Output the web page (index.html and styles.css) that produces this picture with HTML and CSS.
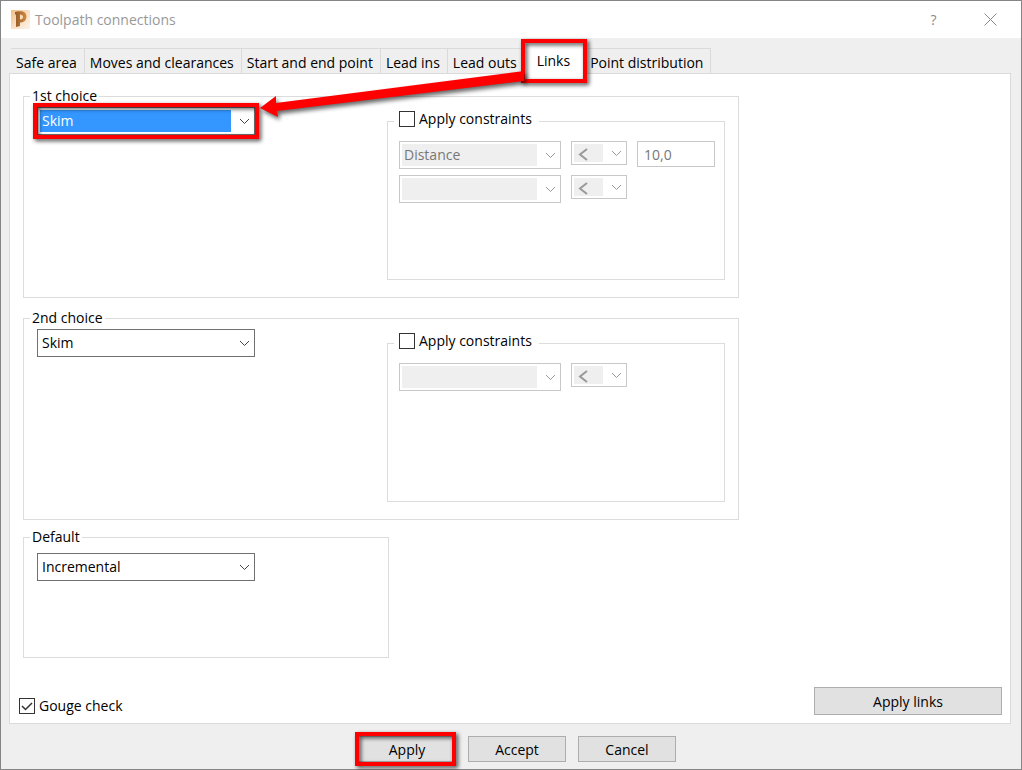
FILE: index.html
```html
<!DOCTYPE html>
<html lang="en">
<head>
    <meta charset="UTF-8">
    <meta name="viewport" content="width=device-width, initial-scale=1.0">
    <title>Toolpath connections</title>
    <link rel="stylesheet" href="styles.css">
</head>
<body>
    <div class="window">
        <header class="titlebar">
            <svg class="app-icon" viewBox="0 0 19 19" aria-hidden="true">
                <defs>
                    <linearGradient id="tile" x1="0" y1="0" x2="1" y2="1">
                        <stop offset="0" stop-color="#f3bd84"/>
                        <stop offset="0.5" stop-color="#f9dfc4"/>
                        <stop offset="1" stop-color="#fdf3e8"/>
                    </linearGradient>
                    <linearGradient id="stroke" x1="0" y1="0" x2="1" y2="0">
                        <stop offset="0" stop-color="#915c2a"/>
                        <stop offset="1" stop-color="#d68a3c"/>
                    </linearGradient>
                </defs>
                <rect width="19" height="19" fill="url(#tile)"/>
                <path d="M4 2C7 1 15.500 0 15.500 6.500C15.500 11 12 12.500 9 12.500V16L5 17V5L4 4zM9 4.500v5c4 0 4-5 0-5z" fill="url(#stroke)" fill-rule="evenodd"/>
            </svg>
            <h1 class="title">Toolpath connections</h1>
            <button class="title-button" type="button" aria-label="Help">?</button>
            <button class="title-button" type="button" aria-label="Close">
                <svg width="13" height="13" viewBox="0 0 13 13"><path d="M.5.5l12 12M12.500.5l-12 12" fill="none" stroke="#888"/></svg>
            </button>
        </header>

        <nav class="tabs">
            <button class="tab" type="button">Safe area</button>
            <button class="tab" type="button">Moves and clearances</button>
            <button class="tab" type="button">Start and end point</button>
            <button class="tab" type="button">Lead ins</button>
            <button class="tab" type="button">Lead outs</button>
            <button class="tab active marked" type="button">Links</button>
            <button class="tab" type="button">Point distribution</button>
        </nav>

        <main class="panel">
            <fieldset class="group choice">
                <legend>1st choice</legend>
                <div class="marked combo-wrap">
                    <select class="combo selected" aria-label="1st choice">
                        <option>Skim</option>
                        <option>Incremental</option>
                    </select>
                </div>
                <fieldset class="group constraints">
                    <legend><label class="check"><input type="checkbox"> Apply constraints</label></legend>
                    <div class="row">
                        <select class="combo" aria-label="Constraint" disabled><option>Distance</option></select>
                        <select class="operator" aria-label="Less than" disabled><option value="lt"></option></select>
                        <input class="value" type="text" value="10,0" aria-label="Value" disabled>
                    </div>
                    <div class="row">
                        <select class="combo" aria-label="Constraint" disabled><option value=""></option></select>
                        <select class="operator" aria-label="Less than" disabled><option value="lt"></option></select>
                    </div>
                </fieldset>
            </fieldset>

            <fieldset class="group choice">
                <legend>2nd choice</legend>
                <div class="combo-wrap">
                    <select class="combo" aria-label="2nd choice">
                        <option>Skim</option>
                        <option>Incremental</option>
                    </select>
                </div>
                <fieldset class="group constraints">
                    <legend><label class="check"><input type="checkbox"> Apply constraints</label></legend>
                    <div class="row">
                        <select class="combo" aria-label="Constraint" disabled><option value=""></option></select>
                        <select class="operator" aria-label="Less than" disabled><option value="lt"></option></select>
                    </div>
                </fieldset>
            </fieldset>

            <fieldset class="group default">
                <legend>Default</legend>
                <div class="combo-wrap">
                    <select class="combo" aria-label="Default">
                        <option>Incremental</option>
                        <option>Skim</option>
                    </select>
                </div>
            </fieldset>

            <div class="panel-bottom">
                <label class="check"><input type="checkbox" checked> Gouge check</label>
                <button class="button wide" type="button">Apply links</button>
            </div>
        </main>

        <footer class="footer">
            <button class="button marked" type="button">Apply</button>
            <button class="button" type="button">Accept</button>
            <button class="button" type="button">Cancel</button>
        </footer>

        <!-- arrow from the Links tab to the first choice -->
        <svg class="arrow" width="266" height="60" viewBox="0 0 266 60" aria-hidden="true">
            <path d="M0 38L16 26V33L264 1V11L17 41L18 47z" fill="#f00"/>
        </svg>
    </div>
</body>
</html>
```
FILE: styles.css
```css
* {
    box-sizing: border-box;
}

body {
    margin: 0;
    font-family: "Open Sans", "Noto Sans", sans-serif;
    font-size: 14px;
    line-height: 20px;
    color: #000;
}

button, select, input {
    font: inherit;
    color: inherit;
    margin: 0;
    border-radius: 0;
}

.window {
    position: relative;
    display: flex;
    flex-direction: column;
    min-height: 100vh;
    border: 1px solid #858585;
    background: #efefef;
}

/* Title bar */
.titlebar {
    display: flex;
    align-items: center;
    height: 37px;
    padding: 0 2px 0 10px;
    background: #fff;
}

.app-icon {
    width: 19px;
    height: 19px;
    margin-right: 5px;
}

.title {
    flex: 1;
    margin: 0;
    font-size: 14px;
    font-weight: 400;
    color: #999;
}

.title-button {
    display: flex;
    align-items: center;
    justify-content: center;
    width: 57px;
    height: 36px;
    padding: 0;
    border: 0;
    background: none;
    color: #888;
}

/* Tabs */
.tabs {
    display: flex;
    padding: 10px 10px 0;
}

.tab {
    height: 25px;
    padding: 3px 7px 0 5px;
    border: solid #dadada;
    border-width: 1px 1px 0 0;
    background: #efefef;
    line-height: 20px;
    white-space: nowrap;
}

.tab.active {
    height: 36px;
    margin: -5px 2px -6px 0;
    padding: 0 13px 0 12px;
    border: 0;
    background: #fff;
}

/* Panel */
.panel {
    flex: 1;
    display: flex;
    flex-direction: column;
    align-items: flex-start;
    margin: 0 10px 0 8px;
    padding: 12px 8px 7px 13px;
    border: 1px solid #dadada;
    background: #fff;
}

.group {
    min-width: 0;
    margin: 0;
    padding: 0 13px;
    border: 1px solid #dcdcdc;
}

.group > legend {
    margin-left: -7px;
    padding: 0 2px;
}

.choice {
    display: grid;
    grid-template-columns: 350px 1fr;
    align-items: start;
    width: 716px;
    max-width: 100%;
    min-height: 212px;
    margin-bottom: 10px;
}

.default {
    width: 366px;
    max-width: 100%;
    min-height: 131px;
    margin-top: -3px;
    padding-top: 5px;
}

.combo-wrap {
    width: 218px;
    height: 28px;
    margin-top: 1px;
}

.constraints {
    min-height: 171px;
    margin-top: 3px;
    padding: 8px 9px 0 11px;
}

.constraints > legend {
    margin-left: -5px;
    padding: 0 7px 4px 5px;
}

.row {
    display: flex;
    align-items: flex-start;
    gap: 10px;
    margin-bottom: 6px;
}

/* Form controls */
.combo, .operator {
    display: block;
    appearance: none;
    border: 1px solid #707070;
    background-color: #fff;
    background-repeat: no-repeat;
    opacity: 1;
}

.combo {
    width: 218px;
    height: 28px;
    padding: 0 24px 0 4px;
    background-image: url("data:image/svg+xml,%3Csvg xmlns='http://www.w3.org/2000/svg' width='11' height='7'%3E%3Cpath d='M1 1l4.500 4.500L10 1' fill='none' stroke='%23444'/%3E%3C/svg%3E");
    background-position: right 4px center;
}

.combo.selected {
    color: #fff;
    background-image: url("data:image/svg+xml,%3Csvg xmlns='http://www.w3.org/2000/svg' width='11' height='7'%3E%3Cpath d='M1 1l4.500 4.500L10 1' fill='none' stroke='%23444'/%3E%3C/svg%3E"), linear-gradient(#3397ff, #3397ff);
    background-size: 11px 7px, 191px 22px;
    background-position: right 4px center, 2px 2px;
}

.combo:disabled, .operator:disabled {
    border-color: #c8c8c8;
    color: #777;
}

.combo:disabled {
    width: 162px;
    background-image: url("data:image/svg+xml,%3Csvg xmlns='http://www.w3.org/2000/svg' width='11' height='7'%3E%3Cpath d='M1 1l4.500 4.500L10 1' fill='none' stroke='%23999'/%3E%3C/svg%3E"), linear-gradient(#efefef, #efefef);
    background-size: 11px 7px, 135px 22px;
    background-position: right 4px center, 2px 2px;
}

.operator:disabled {
    width: 56px;
    height: 24px;
    background-image: url("data:image/svg+xml,%3Csvg xmlns='http://www.w3.org/2000/svg' width='11' height='7'%3E%3Cpath d='M1 1l4.500 4.500L10 1' fill='none' stroke='%23999'/%3E%3C/svg%3E"), url("data:image/svg+xml,%3Csvg xmlns='http://www.w3.org/2000/svg' width='10' height='13'%3E%3Cpath d='M9 1L2 6.500L9 12' fill='none' stroke='%23999' stroke-width='2'/%3E%3C/svg%3E"), linear-gradient(#efefef, #efefef);
    background-size: 11px 7px, 10px 13px, 29px 18px;
    background-position: right 4px center, 6px 6px, 2px 2px;
}

.value {
    width: 78px;
    height: 26px;
    padding: 0 6px;
    border: 1px solid #c8c8c8;
    background: #fff;
}

.value:disabled {
    color: #777;
}

.check {
    display: flex;
    align-items: center;
    gap: 4px;
}

.check input {
    appearance: none;
    width: 16px;
    height: 16px;
    border: 1px solid #333;
    background: #fff;
}

.check input:checked {
    background: url("data:image/svg+xml,%3Csvg xmlns='http://www.w3.org/2000/svg' width='14' height='14'%3E%3Cpath d='M2 7l3.500 3.500L12 4' fill='none' stroke='%23333' stroke-width='1.500'/%3E%3C/svg%3E") no-repeat center;
}

.button {
    width: 98px;
    height: 26px;
    padding: 2px 0 0;
    border: 1px solid #adadad;
    background: #e1e1e1;
}

.button.wide {
    width: 188px;
    height: 28px;
}

.panel-bottom {
    display: flex;
    align-items: center;
    justify-content: space-between;
    align-self: stretch;
    margin-top: auto;
    margin-left: -4px;
}

.panel-bottom .check {
    padding-top: 10px;
}

.footer {
    display: flex;
    justify-content: center;
    gap: 12px;
    padding: 12px 0 7px 12px;
}

/* Red highlight frames */
.marked {
    position: relative;
}

.marked::after {
    content: "";
    position: absolute;
    inset: -4px;
    border: 4px solid #f00;
    filter: drop-shadow(2px 2px 2px rgba(0, 0, 0, 0.7));
    pointer-events: none;
}

.button.marked::after {
    inset: -5px -1px -5px -4px;
}

.arrow {
    position: absolute;
    left: 259px;
    top: 69px;
    filter: drop-shadow(2px 3px 2px rgba(0, 0, 0, 0.6));
    pointer-events: none;
}
```
